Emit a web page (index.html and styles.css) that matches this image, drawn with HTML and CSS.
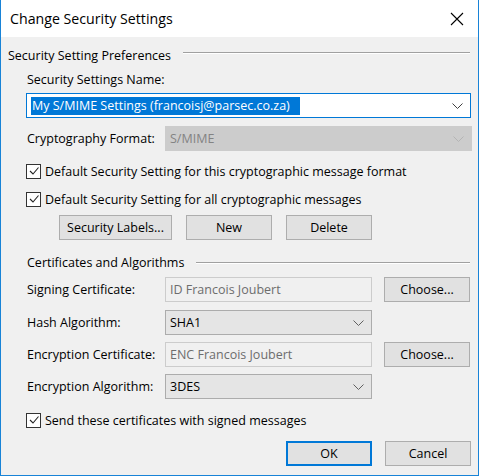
FILE: index.html
```html
<!DOCTYPE html>
<html>
<head>
<meta charset="utf-8">
<link rel="stylesheet" href="styles.css">
</head>
<body>
<div class="window">
  <div class="titlebar">
    <span class="title">Change Security Settings</span>
    <svg class="close" width="14" height="14" viewBox="0 0 14 14"><path d="M1 1 L13 13 M13 1 L1 13" stroke="#000" stroke-width="1.1" fill="none"/></svg>
  </div>
  <div class="content">
    <div class="group-head g1"><span>Security Setting Preferences</span><div class="rule"></div></div>
    <div class="label name-label">Security Settings Name:</div>
    <div class="combo focus wide">
      <span class="sel">My S/MIME Settings (francoisj@parsec.co.za)</span>
      <svg class="chev" width="11" height="6" viewBox="0 0 11 6"><path d="M0.5 0.5 L5.5 5.5 L10.5 0.5" stroke="#404040" fill="none"/></svg>
    </div>
    <div class="row r-crypto">
      <span class="label lab">Cryptography Format:</span>
      <div class="combo disabled grow">
        <span class="val">S/MIME</span>
        <svg class="chev" width="11" height="6" viewBox="0 0 11 6"><path d="M0.5 0.5 L5.5 5.5 L10.5 0.5" stroke="#b4b4b4" fill="none"/></svg>
      </div>
    </div>
    <div class="check c1"><span class="box"><svg width="12" height="12" viewBox="0 0 12 12"><path d="M2 6 L5 9 L10.5 2.5" stroke="#222" stroke-width="1.1" fill="none"/></svg></span><span>Default Security Setting for this cryptographic message format</span></div>
    <div class="check c2"><span class="box"><svg width="12" height="12" viewBox="0 0 12 12"><path d="M2 6 L5 9 L10.5 2.5" stroke="#222" stroke-width="1.1" fill="none"/></svg></span><span>Default Security Setting for all cryptographic messages</span></div>
    <div class="btn-row">
      <div class="btn b-labels">Security Labels...</div>
      <div class="btn">New</div>
      <div class="btn">Delete</div>
    </div>
    <div class="group-head g2"><span>Certificates and Algorithms</span><div class="rule"></div></div>
    <div class="row r-sign">
      <span class="label lab">Signing Certificate:</span>
      <div class="textbox">ID Francois Joubert</div>
      <div class="btn choose">Choose...</div>
    </div>
    <div class="row r-hash">
      <span class="label lab">Hash Algorithm:</span>
      <div class="combo normal mid">
        <span class="val">SHA1</span>
        <svg class="chev" width="11" height="6" viewBox="0 0 11 6"><path d="M0.5 0.5 L5.5 5.5 L10.5 0.5" stroke="#606060" fill="none"/></svg>
      </div>
    </div>
    <div class="row r-enc">
      <span class="label lab">Encryption Certificate:</span>
      <div class="textbox">ENC Francois Joubert</div>
      <div class="btn choose">Choose...</div>
    </div>
    <div class="row r-alg">
      <span class="label lab">Encryption Algorithm:</span>
      <div class="combo normal mid">
        <span class="val">3DES</span>
        <svg class="chev" width="11" height="6" viewBox="0 0 11 6"><path d="M0.5 0.5 L5.5 5.5 L10.5 0.5" stroke="#606060" fill="none"/></svg>
      </div>
    </div>
    <div class="check c3"><span class="box"><svg width="12" height="12" viewBox="0 0 12 12"><path d="M2 6 L5 9 L10.5 2.5" stroke="#222" stroke-width="1.1" fill="none"/></svg></span><span>Send these certificates with signed messages</span></div>
    <div class="footer">
      <div class="btn ok">OK</div>
      <div class="btn">Cancel</div>
    </div>
  </div>
</div>
</body>
</html>
```

FILE: styles.css
```css
* { box-sizing: border-box; }
html, body { margin: 0; padding: 0; background: #f0f0f0; }
body {
  font-family: "Open Sans", "Noto Sans", "Liberation Sans", sans-serif;
  font-size: 12.5px;
  color: #000;
}
.window {
  width: 479px;
  height: 476px;
  border: 1px solid #1883d7;
  border-top: none;
  background: #f0f0f0;
  display: flex;
  flex-direction: column;
  overflow: hidden;
}
.titlebar {
  height: 37px;
  background: #fff;
  display: flex;
  align-items: center;
  justify-content: space-between;
  padding: 0 14px 0 9px;
  flex: none;
}
.title { font-size: 14.2px; }
.close { display: block; }
.content {
  flex: 1;
  padding: 0 7px 0 7px;
  display: flex;
  flex-direction: column;
}
.group-head {
  display: flex;
  align-items: center;
  height: 16px;
  line-height: 16px;
}
.group-head .rule {
  flex: 1;
  height: 2px;
  border-top: 1px solid #a0a0a0;
  border-bottom: 1px solid #fff;
  margin-left: 10px;
  margin-right: 1px;
}
.g1 { margin-top: 11px; }
.g1 .rule { margin-left: 12px; margin-top: -6px; }
.g2 { margin-top: 15px; padding-left: 19px; }
.g2 .rule { margin-left: 12px; }
.label { line-height: 16px; }
.name-label { margin-top: 8px; padding-left: 19px; }
.combo {
  height: 25px;
  display: flex;
  align-items: center;
  justify-content: space-between;
  padding: 0 7px 0 4px;
  border: 1px solid #acacac;
}
.combo.focus {
  margin-top: 5px;
  margin-left: 18px;
  border-color: #0078d7;
  background: #fff;
}
.sel {
  background: #0078d7;
  color: #fff;
  padding: 0 1px 0 1px;
  line-height: 18px;
  width: 269px;
}
.combo.disabled {
  background: #cccccc;
  border-color: #cccccc;
  color: #838383;
}
.combo.normal {
  background: #e5e5e5;
  border-color: #acacac;
}
.chev { display: block; flex: none; }
.row {
  display: flex;
  align-items: center;
  height: 25px;
  padding-left: 19px;
}
.lab { width: 138px; flex: none; }
.grow { flex: 1; margin-right: -1px; }
.r-crypto { margin-top: 8px; }
.check {
  display: flex;
  align-items: center;
  height: 16px;
  padding-left: 18px;
}
.check .box {
  width: 15px;
  height: 15px;
  border: 1px solid #333;
  background: #fff;
  display: flex;
  align-items: center;
  justify-content: center;
  margin-right: 4px;
  flex: none;
}
.check .box svg { display: block; }
.c1 { margin-top: 12px; }
.c2 { margin-top: 12px; }
.c3 { margin-top: 13px; }
.btn-row {
  display: flex;
  gap: 14px;
  padding-left: 51px;
  margin-top: 8px;
}
.btn {
  height: 25px;
  width: 86px;
  border: 1px solid #adadad;
  background: #e1e1e1;
  display: flex;
  align-items: center;
  justify-content: center;
}
.b-labels { width: 113px; }
.textbox {
  width: 207px;
  height: 25px;
  border: 1px solid #cccccc;
  color: #6d6d6d;
  display: flex;
  align-items: center;
  padding-left: 4px;
  flex: none;
}
.choose { margin-left: 12px; }
.combo.mid { width: 207px; flex: none; }
.r-sign { margin-top: 6px; }
.r-hash { margin-top: 8px; }
.r-enc { margin-top: 7px; }
.r-alg { margin-top: 7px; }
.footer {
  display: flex;
  justify-content: flex-end;
  gap: 13px;
  margin-top: 13px;
}
.btn.ok { border: 2px solid #0078d7; }
```
